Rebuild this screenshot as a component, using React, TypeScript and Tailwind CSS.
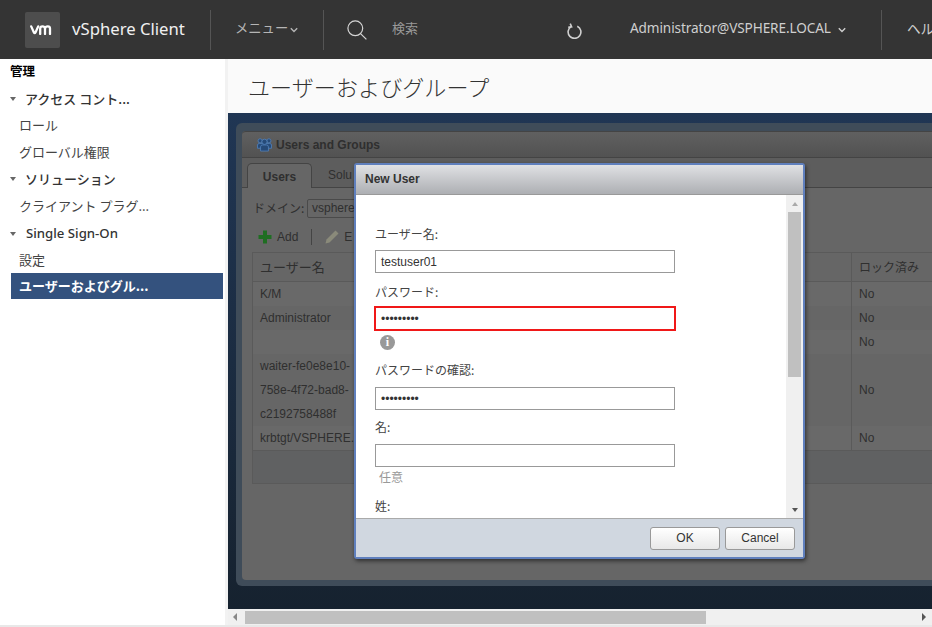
import React from "react";

const jp = "font-['Noto_Sans_CJK_JP','Noto_Sans',sans-serif]";
const ar = "font-['Liberation_Sans','Noto_Sans_CJK_JP',sans-serif]";

function Chevron({ className }: { className: string }) {
  return (
    <svg viewBox="0 0 8 6" className={className} fill="none" stroke="currentColor" strokeWidth="1.4">
      <path d="M0.8 1.2 L4 4.4 L7.2 1.2" />
    </svg>
  );
}

function Caret() {
  return <span className="mt-[2px] w-0 h-0 border-l-[3.5px] border-r-[3.5px] border-t-[4px] border-l-transparent border-r-transparent border-t-[#666] mr-[9px] ml-[10px]" />;
}

function NavGroup({ children }: { children: React.ReactNode }) {
  return (
    <div className={`h-[26.8px] flex items-center text-[13px] font-medium text-[#333] ${jp}`}>
      <Caret />
      {children}
    </div>
  );
}

function NavItem({ children, className = "" }: { children: React.ReactNode; className?: string }) {
  return <div className={`h-[26.6px] flex items-center pl-[19px] text-[13px] text-[#444] ${jp} ${className}`}>{children}</div>;
}

function Sidebar() {
  return (
    <aside className="w-[228px] shrink-0 bg-white border-r-[3px] border-[#f2f2f2] flex flex-col pr-[2px]">
      <div className={`h-[24px] mb-[2px] flex items-center pl-[10px] text-[12.5px] font-bold text-black ${jp}`}>管理</div>
      <NavGroup>アクセス コント...</NavGroup>
      <NavItem>ロール</NavItem>
      <NavItem>グローバル権限</NavItem>
      <NavGroup>ソリューション</NavGroup>
      <NavItem className="mt-[1px]">クライアント プラグ...</NavItem>
      <div className="h-[26.8px] flex items-center text-[13.2px] font-medium text-[#333] font-['Noto_Sans',sans-serif]">
        <Caret />
        <span className="mt-[2px] ml-px">Single Sign-On</span>
      </div>
      <NavItem>設定</NavItem>
      <div className={`ml-[11px] w-[212px] h-[26px] bg-[#34527e] flex items-center pl-[8px] text-[13px] font-bold text-white ${jp}`}>
        ユーザーおよびグル...
      </div>
    </aside>
  );
}

function Header() {
  return (
    <header className="h-[59px] bg-[#343434] flex items-center shrink-0 overflow-hidden whitespace-nowrap *:shrink-0">
      <div className="ml-[25px] w-[35px] h-[36px] rounded-[2px] bg-[#4d4d4d] flex items-center justify-center">
        <svg viewBox="0 0 25 10" className="w-[25px] h-[10px]" fill="none" stroke="#fff" strokeWidth="2.3" strokeLinecap="round">
          <path d="M1.2 1.4 L3.9 7.4 Q4.7 8.8 5.5 7.4 L8.2 1.4" />
          <path d="M10.2 9 V3.6 Q10.2 1.4 12.6 1.4 Q14.6 1.4 15 3.6 V9 M15 3.6 Q15.4 1.4 17.8 1.4 Q20 1.4 20 3.6 V9" />
        </svg>
      </div>
      <span className="ml-[12px] mb-[2px] text-[16.7px] text-[#f0f0f0] font-['Noto_Sans',sans-serif] w-[138px]">vSphere Client</span>
      <div className="w-px h-[40px] bg-[#555]" />
      <span className={`ml-[24px] mb-[3px] w-[53px] text-[13.3px] text-[#b5b5b5] ${jp}`}>メニュー</span>
      <Chevron className="ml-[2px] w-[8px] h-[6px] text-[#b5b5b5]" />
      <div className="ml-[25px] w-px h-[40px] bg-[#555]" />
      <svg viewBox="0 0 20 20" className="ml-[23px] w-[20px] h-[20px]" fill="none" stroke="#d5d5d5" strokeWidth="1.2">
        <circle cx="8.3" cy="8.3" r="7.4" />
        <path d="M13.8 13.8 L19.4 19.4" />
      </svg>
      <span className={`ml-[25px] mb-[3px] w-[26px] text-[13px] text-[#999] ${jp}`}>検索</span>
      <svg viewBox="0 0 16 16" className="ml-[148px] mt-[2px] w-[16px] h-[16px]" fill="none" stroke="#d0d0d0" strokeWidth="1.6">
        <path d="M5 3.6 A6.4 6.4 0 1 0 11.3 3.2" />
        <path d="M4.2 0.6 L5.6 3.8 L2.2 4.2" />
      </svg>
      <span className="ml-[48px] mb-[2px] text-[13.6px] text-[#cfcfcf] font-['Noto_Sans',sans-serif] w-[203px] tracking-[-0.1px]">Administrator@VSPHERE.LOCAL</span>
      <Chevron className="ml-[5px] w-[8px] h-[6px] text-[#cfcfcf]" />
      <div className="ml-[35px] w-px h-[40px] bg-[#555]" />
      <span className={`ml-[25px] mb-[2px] text-[13.6px] text-[#cfcfcf] ${jp}`}>ヘルプ</span>
    </header>
  );
}

const rows = [
  { name: ["K/M"], h: "h-[24px]", bg: "bg-[#696969]" },
  { name: ["Administrator"], h: "h-[24px]", bg: "bg-[#666]" },
  { name: [""], h: "h-[24px]", bg: "bg-[#696969]" },
  { name: ["waiter-fe0e8e10-", "758e-4f72-bad8-", "c2192758488f"], h: "h-[72px]", bg: "bg-[#666]" },
  { name: ["krbtgt/VSPHERE."], h: "h-[24px]", bg: "bg-[#696969]" },
];

function UsersPanel() {
  return (
    <div className="w-[760px] h-[463px] shrink-0 bg-[#3f4c59] rounded-tl-[6px] rounded-bl-[6px] pt-[8px] pl-[6px] pb-[6px]">
      <div className={`h-full bg-[#666] rounded-tl-[4px] rounded-bl-[4px] flex flex-col ${ar}`}>
        <div className="h-[27px] shrink-0 border-t border-b border-[#444] bg-gradient-to-b from-[#606060] to-[#525252] flex items-center pl-[15px] rounded-tl-[4px]">
          <svg viewBox="0 0 16 15" className="w-[15px] h-[15px]" fill="#264a78" stroke="#4f7fb8" strokeWidth="0.9">
            <circle cx="3.3" cy="3.6" r="2.2" />
            <circle cx="12.7" cy="3.6" r="2.2" />
            <path d="M0.5 11.5 V8 Q0.5 6.5 2.5 6.5 H13.5 Q15.5 6.5 15.5 8 V11.5 Z" />
            <circle cx="8" cy="4.6" r="2.8" />
            <path d="M3.8 14.5 V10 Q3.8 8 6 8 H10 Q12.2 8 12.2 10 V14.5 Z" />
          </svg>
          <span className="ml-[4px] text-[12px] font-bold text-[#2f2f2f]">Users and Groups</span>
        </div>
        <div className="h-[30px] shrink-0 bg-[#5d5d5d] border-b border-[#444] flex items-end pl-[5px]">
          <div className="w-[65px] h-[25px] -mb-px pt-[1px] bg-[#666] border border-b-0 border-[#444] rounded-t-[5px] flex items-center justify-center text-[12px] font-bold text-[#2f2f2f]">Users</div>
          <div className="ml-[16px] h-[25px] flex items-center text-[12px] text-[#2f2f2f]">Solu</div>
        </div>
        <div className="h-[35px] shrink-0 flex items-center pl-[11px] pt-[5px] text-[12px] text-[#2f2f2f]">
          <span className={`w-[54px] ${jp}`}>ドメイン:</span>
          <span className="w-[120px] h-[19px] border border-[#4a4a4a] rounded-[2px] pl-[4px] leading-[17px]">vsphere</span>
        </div>
        <div className="h-[29px] pb-[2px] shrink-0 flex items-center pl-[16px] text-[12px] text-[#2f2f2f]">
          <svg viewBox="0 0 14 14" className="w-[14px] h-[14px]" fill="#1f6e22">
            <path d="M5 0.5 H9 V5 H13.5 V9 H9 V13.5 H5 V9 H0.5 V5 H5 Z" />
          </svg>
          <span className="ml-[5px]">Add</span>
          <div className="ml-[13px] w-px h-[16px] bg-[#444]" />
          <svg viewBox="0 0 14 14" className="ml-[13px] w-[14px] h-[14px]" fill="#8a8a7a">
            <path d="M10.5 0.5 L13.5 3.5 L4.5 12.5 L0.5 13.5 L1.5 9.5 Z" />
          </svg>
          <span className="ml-[5px]">E</span>
        </div>
        <div className="ml-[10px] flex-none border border-[#5a5a5a] border-r-0">
          <div className="h-[29px] flex border-b border-[#5a5a5a] text-[#2f2f2f]">
            <div className={`w-[599px] border-r border-[#5a5a5a] flex items-center pl-[7px] text-[13px] ${jp}`}>ユーザー名</div>
            <div className={`flex-1 flex items-center pl-[7px] text-[12px] ${jp}`}>ロック済み</div>
          </div>
          {rows.map((r, i) => (
            <div key={i} className={`${r.h} ${r.bg} flex text-[12px] text-[#2f2f2f]`}>
              <div className="w-[599px] border-r border-[#5a5a5a] pl-[7px] flex flex-col justify-center">
                {r.name.map((n, j) => (
                  <div key={j} className="h-[24px] leading-[24px] whitespace-nowrap">{n}</div>
                ))}
              </div>
              <div className="flex-1 flex items-center pl-[7px]">No</div>
            </div>
          ))}
          <div className="h-[33px] border-t border-[#5a5a5a] bg-[#606162]" />
        </div>
      </div>
    </div>
  );
}

function Field({ label, value, className = "", error, gap = "mt-[8px]" }: { label: string; value?: string; className?: string; error?: boolean; gap?: string }) {
  return (
    <div className={className}>
      <div className={`text-[12px] leading-[17px] text-[#444] ${jp}`}>{label}</div>
      <div
        className={
          error
            ? `${gap} -ml-px w-[302px] h-[25px] border-2 border-[#f01818] pl-[5px] flex items-center text-[12px] text-[#333]`
            : `${gap} w-[300px] h-[23px] border border-[#999] pl-[5px] flex items-center text-[12px] text-[#333]`
        }
      >
        {value}
      </div>
    </div>
  );
}

function Dialog() {
  return (
    <div className={`absolute left-[354px] top-[163px] w-[451px] h-[396px] border-2 border-[#5f7fbd] rounded-[3px] shadow-[1px_2px_4px_rgba(0,0,0,0.55)] bg-white flex flex-col overflow-hidden ${ar}`}>
      <div className="h-[30px] shrink-0 bg-gradient-to-b from-[#e0e1e4] to-[#adafb3] border-b border-[#999] flex items-center pl-[9px] pb-[2px] text-[12px] font-bold text-[#333]">
        New User
      </div>
      <div className="flex-1 flex min-h-0 overflow-hidden">
        <div className="flex-1 pl-[19px] pt-[30px] overflow-hidden">
          <Field label="ユーザー名:" value="testuser01" />
          <Field label="パスワード:" value="•••••••••" className="mt-[10px]" error gap="mt-[6px]" />
          <div className="ml-[5px] mt-[4px] w-[15px] h-[15px] rounded-full bg-[#999] text-white text-[12px] font-bold leading-[15px] text-center font-['Liberation_Serif',serif]">i</div>
          <Field label="パスワードの確認:" value="•••••••••" className="mt-[11px]" gap="mt-[9px]" />
          <Field label="名:" className="mt-[8px]" gap="mt-[9px]" />
          <div className={`ml-[4px] mt-[1px] text-[12px] leading-[17px] text-[#999] ${jp}`}>任意</div>
          <div className={`mt-[12px] text-[12px] leading-[17px] text-[#444] ${jp}`}>姓:</div>
        </div>
        <div className="w-[17px] shrink-0 bg-[#f0f0f0] flex flex-col items-center">
          <div className="mt-[7px] w-0 h-0 border-l-[3.5px] border-r-[3.5px] border-b-[4px] border-l-transparent border-r-transparent border-b-[#aaa]" />
          <div className="mt-[6px] w-[13px] h-[165px] bg-[#c0c0c0]" />
          <div className="mt-auto mb-[6px] w-0 h-0 border-l-[3.5px] border-r-[3.5px] border-t-[4px] border-l-transparent border-r-transparent border-t-[#555]" />
        </div>
      </div>
      <div className="h-[39px] shrink-0 bg-[#d0d7e0] border-t border-[#aaa] flex items-center justify-end pr-[8px] gap-[5px]">
        <div className="w-[70px] h-[23px] rounded-[3px] border border-[#999] bg-gradient-to-b from-white to-[#e8e8e8] flex items-center justify-center text-[12px] text-[#333]">OK</div>
        <div className="w-[70px] h-[23px] rounded-[3px] border border-[#999] bg-gradient-to-b from-white to-[#e8e8e8] flex items-center justify-center text-[12px] text-[#333]">Cancel</div>
      </div>
    </div>
  );
}

export default function App() {
  return (
    <div className="relative w-[932px] h-[627px] overflow-hidden bg-white flex flex-col">
      <Header />
      <div className="flex-1 flex min-h-0">
        <Sidebar />
        <main className="flex-1 min-w-0 flex flex-col overflow-hidden">
          <div className="h-[54px] shrink-0 bg-[#fafafa] flex items-center pl-[20px]">
            <h1 className={`text-[22px] tracking-[0.1px] font-light text-[#333] ${jp}`}>ユーザーおよびグループ</h1>
          </div>
          <div className="h-[496px] shrink-0 bg-gradient-to-b from-[#203654] to-[#16222f] pt-[10px] pl-[8px] overflow-hidden">
            <UsersPanel />
          </div>
          <div className="h-[16px] shrink-0 bg-[#f0f0f0] flex items-center pl-[5px]">
            <div className="w-0 h-0 border-t-[4px] border-b-[4px] border-r-[4px] border-t-transparent border-b-transparent border-r-[#888]" />
            <div className="ml-[8px] w-[461px] h-[13px] bg-[#c0c0c0]" />
            <div className="ml-auto mr-[6px] w-0 h-0 border-t-[4px] border-b-[4px] border-l-[4px] border-t-transparent border-b-transparent border-l-[#555]" />
          </div>
        </main>
      </div>
      <div className="h-[2px] shrink-0 bg-[#e8e8e8]" />
      <Dialog />
    </div>
  );
}
